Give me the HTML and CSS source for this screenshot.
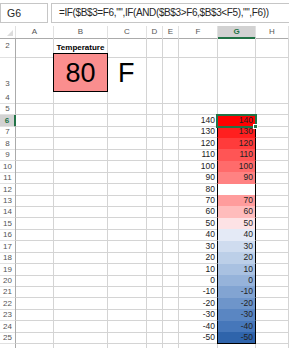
FILE: index.html
```html
<!DOCTYPE html>
<html>
<head>
<meta charset="utf-8">
<link rel="stylesheet" href="styles.css">
</head>
<body>
<div class="app">
  <div class="topbar">
    <div class="namebox">G6</div>
    <div class="formula">=IF($B$3=F6,"",IF(AND($B$3&gt;F6,$B$3&lt;F5),"",F6))</div>
  </div>
  <div class="sheet">
    <div class="row colhdr">
      <div class="c hdr corner"><span class="tri"></span></div>
      <div class="c">A</div><div class="c">B</div><div class="c">C</div><div class="c">D</div><div class="c">E</div><div class="c">F</div><div class="c sel">G</div><div class="c">H</div>
    </div>
    <div class="row r2">
      <div class="c hdr">2</div><div class="c"></div><div class="c title">Temperature</div><div class="c"></div><div class="c"></div><div class="c"></div><div class="c"></div><div class="c"></div><div class="c"></div>
    </div>
    <div class="row r3">
      <div class="c hdr bottom">3</div><div class="c"></div><div class="c big temp">80</div><div class="c big unit">F</div><div class="c"></div><div class="c"></div><div class="c"></div><div class="c"></div><div class="c"></div>
    </div>
    <div class="row"><div class="c hdr">4</div><div class="c"></div><div class="c"></div><div class="c"></div><div class="c"></div><div class="c"></div><div class="c"></div><div class="c"></div><div class="c"></div></div>
    <div class="row"><div class="c hdr">5</div><div class="c"></div><div class="c"></div><div class="c"></div><div class="c"></div><div class="c"></div><div class="c"></div><div class="c g-top"></div><div class="c"></div></div>
    <div class="row"><div class="c hdr selrow">6</div><div class="c"></div><div class="c"></div><div class="c"></div><div class="c"></div><div class="c"></div><div class="c num">140</div><div class="c num g active v140">140<span class="handle"></span></div><div class="c"></div></div>
    <div class="row"><div class="c hdr">7</div><div class="c"></div><div class="c"></div><div class="c"></div><div class="c"></div><div class="c"></div><div class="c num">130</div><div class="c num g v130">130</div><div class="c"></div></div>
    <div class="row"><div class="c hdr">8</div><div class="c"></div><div class="c"></div><div class="c"></div><div class="c"></div><div class="c"></div><div class="c num">120</div><div class="c num g v120">120</div><div class="c"></div></div>
    <div class="row"><div class="c hdr">9</div><div class="c"></div><div class="c"></div><div class="c"></div><div class="c"></div><div class="c"></div><div class="c num">110</div><div class="c num g v110">110</div><div class="c"></div></div>
    <div class="row"><div class="c hdr">10</div><div class="c"></div><div class="c"></div><div class="c"></div><div class="c"></div><div class="c"></div><div class="c num">100</div><div class="c num g v100">100</div><div class="c"></div></div>
    <div class="row"><div class="c hdr">11</div><div class="c"></div><div class="c"></div><div class="c"></div><div class="c"></div><div class="c"></div><div class="c num">90</div><div class="c num g v90">90</div><div class="c"></div></div>
    <div class="row"><div class="c hdr">12</div><div class="c"></div><div class="c"></div><div class="c"></div><div class="c"></div><div class="c"></div><div class="c num">80</div><div class="c num g v80"></div><div class="c"></div></div>
    <div class="row"><div class="c hdr">13</div><div class="c"></div><div class="c"></div><div class="c"></div><div class="c"></div><div class="c"></div><div class="c num">70</div><div class="c num g v70">70</div><div class="c"></div></div>
    <div class="row"><div class="c hdr">14</div><div class="c"></div><div class="c"></div><div class="c"></div><div class="c"></div><div class="c"></div><div class="c num">60</div><div class="c num g v60">60</div><div class="c"></div></div>
    <div class="row"><div class="c hdr">15</div><div class="c"></div><div class="c"></div><div class="c"></div><div class="c"></div><div class="c"></div><div class="c num">50</div><div class="c num g v50">50</div><div class="c"></div></div>
    <div class="row"><div class="c hdr">16</div><div class="c"></div><div class="c"></div><div class="c"></div><div class="c"></div><div class="c"></div><div class="c num">40</div><div class="c num g v40">40</div><div class="c"></div></div>
    <div class="row"><div class="c hdr">17</div><div class="c"></div><div class="c"></div><div class="c"></div><div class="c"></div><div class="c"></div><div class="c num">30</div><div class="c num g v30">30</div><div class="c"></div></div>
    <div class="row"><div class="c hdr">18</div><div class="c"></div><div class="c"></div><div class="c"></div><div class="c"></div><div class="c"></div><div class="c num">20</div><div class="c num g v20">20</div><div class="c"></div></div>
    <div class="row"><div class="c hdr">19</div><div class="c"></div><div class="c"></div><div class="c"></div><div class="c"></div><div class="c"></div><div class="c num">10</div><div class="c num g v10">10</div><div class="c"></div></div>
    <div class="row"><div class="c hdr">20</div><div class="c"></div><div class="c"></div><div class="c"></div><div class="c"></div><div class="c"></div><div class="c num">0</div><div class="c num g v0">0</div><div class="c"></div></div>
    <div class="row"><div class="c hdr">21</div><div class="c"></div><div class="c"></div><div class="c"></div><div class="c"></div><div class="c"></div><div class="c num">-10</div><div class="c num g vm10">-10</div><div class="c"></div></div>
    <div class="row"><div class="c hdr">22</div><div class="c"></div><div class="c"></div><div class="c"></div><div class="c"></div><div class="c"></div><div class="c num">-20</div><div class="c num g vm20">-20</div><div class="c"></div></div>
    <div class="row"><div class="c hdr">23</div><div class="c"></div><div class="c"></div><div class="c"></div><div class="c"></div><div class="c"></div><div class="c num">-30</div><div class="c num g vm30">-30</div><div class="c"></div></div>
    <div class="row"><div class="c hdr">24</div><div class="c"></div><div class="c"></div><div class="c"></div><div class="c"></div><div class="c"></div><div class="c num">-40</div><div class="c num g vm40">-40</div><div class="c"></div></div>
    <div class="row"><div class="c hdr">25</div><div class="c"></div><div class="c"></div><div class="c"></div><div class="c"></div><div class="c"></div><div class="c num">-50</div><div class="c num g g-last vm50">-50</div><div class="c"></div></div>
    <div class="row"><div class="c hdr"></div><div class="c"></div><div class="c"></div><div class="c"></div><div class="c"></div><div class="c"></div><div class="c"></div><div class="c"></div><div class="c"></div></div>
  </div>
</div>
</body>
</html>
```
FILE: styles.css
```css
* { box-sizing: border-box; margin: 0; padding: 0; }
html, body { background: #fff; }
body { margin: 0; width: 289px; height: 348px; overflow: hidden; font-family: "Liberation Sans", Arial, sans-serif; color: #000; }
.app { display: flex; flex-direction: column; }

.topbar { height: 26px; display: flex; align-items: flex-start; padding-top: 3px; gap: 3px; background: #fff; }
.namebox { width: 48px; height: 20px; border: 1px solid #c6c6c6; font-size: 10.5px; line-height: 18px; padding-left: 6px; color: #262626; }
.formula { flex: 1; height: 20px; border: 1px solid #c6c6c6; border-right: none; font-size: 10px; letter-spacing: -0.38px; line-height: 18px; padding-left: 7px; color: #262626; white-space: nowrap; overflow: hidden; }

.sheet { display: flex; flex-direction: column; }
.row { display: grid; grid-template-columns: 16px 38px 54px 39px 16px 16px 39px 38px 33px; height: 11.45px; }
.c { border-right: 1px solid #d4d4d4; border-bottom: 1px solid #d4d4d4; font-size: 9px; line-height: 10px; position: relative; }
.hdr { border-right: 1px solid #ababab; color: #555; font-size: 8px; text-align: center; line-height: 11px; border-bottom-color: #e1e1e1; }

.colhdr { height: 12px; }
.colhdr .c { border-bottom: 1px solid #ababab; color: #555; font-size: 8px; text-align: center; line-height: 11px; border-right-color: #e1e1e1; }
.colhdr .sel { background: #d2d2d2; color: #217346; font-weight: bold; border-bottom: 2px solid #217346; }
.corner .tri { position: absolute; right: 2px; bottom: 2px; width: 0; height: 0; border-left: 6px solid transparent; border-bottom: 6px solid #dcdcdc; }

.r2 { height: 16px; }
.r2 .hdr { line-height: 15px; }
.title { font-weight: bold; font-size: 8px; text-align: center; line-height: 19px; }
.r3 { height: 38px; }
.r3 .hdr { line-height: 60px; }
.big { font-family: "Liberation Sans", Arial, sans-serif; font-size: 27px; line-height: 38px; }
.temp { background: #fa8e8e; border: 1px solid #000; margin-left: -1px; margin-top: -1px; height: 39px; text-align: center; }
.unit { padding-left: 10px; }

.selrow { background: #d2d2d2; color: #217346; font-weight: bold; border-right: 2px solid #217346; }

.num { text-align: right; padding-right: 2px; font-size: 8.5px; line-height: 11px; color: #222; }
.g { border-right: 1px solid #000; border-left: 1px solid #000; margin-left: -1px; border-bottom-color: transparent; }
.g-last { border-bottom: 1px solid #000; }
.active { outline: 2px solid #217346; outline-offset: -1px; z-index: 2; }
.handle { position: absolute; right: -3px; bottom: -3px; width: 5px; height: 5px; background: #217346; border: 1px solid #fff; }

.v140 { background: #ff0000; }
.v130 { background: #ff1f1f; }
.v120 { background: #ff3b3b; }
.v110 { background: #ff5555; }
.v100 { background: #ff6b6b; }
.v90 { background: #ff8282; }
.v80 { background: #ffffff; }
.v70 { background: #ff9c9c; }
.v60 { background: #ffbcbc; }
.v50 { background: #fde2e5; }
.v40 { background: #e4eaf6; }
.v30 { background: #cfdcef; }
.v20 { background: #bccfe8; }
.v10 { background: #a9c1e1; }
.v0 { background: #96b3da; }
.vm10 { background: #82a4d2; }
.vm20 { background: #6e95ca; }
.vm30 { background: #5a86c2; }
.vm40 { background: #4677ba; }
.vm50 { background: #2f64ab; }
```
